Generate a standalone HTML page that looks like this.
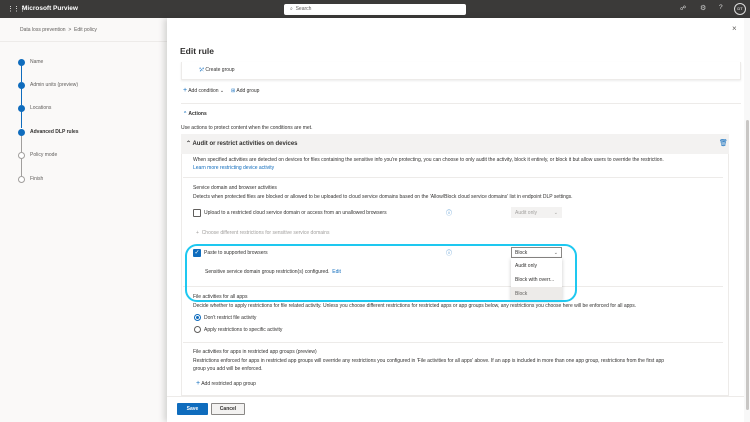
<!DOCTYPE html>
<html><head><meta charset="utf-8"><style>
*{box-sizing:border-box;margin:0;padding:0}
body{width:750px;height:422px;overflow:hidden;font-family:"Liberation Sans",sans-serif;font-size:5px;color:#323130;background:#faf9f8;position:relative}
.a{position:absolute;white-space:nowrap}
.top{left:0;top:0;width:750px;height:18px;background:#3b3a39}
.sep{position:absolute;height:1px;background:#edebe9}
.circ{position:absolute;width:7px;height:7px;border-radius:50%;left:18px}
.done{background:#0f6cbd}
.empty{border:1px solid #a19f9d;background:#fff}
.vl{position:absolute;left:21px;width:1px;background:#0f6cbd}
.blue{color:#0f6cbd}
.dd{position:absolute;border:1px solid #8a8886;background:#fff;height:11px;padding:2px 3px;font-size:5px}
.cb{position:absolute;width:8px;height:8px;border:1px solid #605e5c;border-radius:1px;background:#fff}
</style></head><body>
<div class="a top"></div>
<div class="a" style="left:7px;top:5px;color:#fff;font-size:7px;letter-spacing:-1px">⋮⋮⋮</div>
<div class="a" style="left:22px;top:5px;color:#fff;font-size:6.5px;font-weight:bold">Microsoft Purview</div>
<div class="a" style="left:284px;top:4px;width:182px;height:11px;background:#fff;border-radius:2px"></div>
<div class="a" style="left:290px;top:6px;font-size:5px;color:#605e5c">⌕ &nbsp;Search</div>
<div class="a" style="left:680px;top:5px;color:#ddd;font-size:6px">☍</div>
<div class="a" style="left:700px;top:4px;color:#ccc;font-size:7px">⚙</div>
<div class="a" style="left:719px;top:4px;color:#ddd;font-size:6.5px">?</div>
<div class="a" style="left:734px;top:3px;width:12px;height:12px;border:1px solid #ddd;border-radius:50%;color:#fff;font-size:4px;text-align:center;line-height:10px">DT</div>

<div class="a" style="left:20px;top:27px;color:#605e5c">Data loss prevention &nbsp;&gt;&nbsp; Edit policy</div>
<div class="sep" style="left:0;top:41px;width:167px"></div>
<div class="vl" style="top:65px;height:17px"></div>
<div class="vl" style="top:88px;height:17px"></div>
<div class="vl" style="top:111px;height:17px"></div>
<div class="vl" style="top:135px;height:17px;background:#a19f9d"></div>
<div class="vl" style="top:158px;height:18px;background:#a19f9d"></div>
<div class="circ done" style="top:59px"></div>
<div class="circ done" style="top:82px"></div>
<div class="circ done" style="top:105px"></div>
<div class="circ done" style="top:129px"></div>
<div class="circ empty" style="top:152px"></div>
<div class="circ empty" style="top:176px"></div>
<div class="a" style="left:30px;top:59px;color:#605e5c">Name</div>
<div class="a" style="left:30px;top:82px;color:#605e5c">Admin units (preview)</div>
<div class="a" style="left:30px;top:105px;color:#605e5c">Locations</div>
<div class="a" style="left:30px;top:129px;font-weight:bold">Advanced DLP rules</div>
<div class="a" style="left:30px;top:152px;color:#605e5c">Policy mode</div>
<div class="a" style="left:30px;top:176px;color:#605e5c">Finish</div>

<div class="a" style="left:167px;top:18px;width:583px;height:404px;background:#fff;box-shadow:-3px 0 6px rgba(0,0,0,.15)"></div>
<div class="a" style="left:744px;top:18px;width:6px;height:404px;background:#f8f8f8"></div>
<div class="a" style="left:746px;top:120px;width:3px;height:290px;background:#c8c6c4;border-radius:2px"></div>
<div class="a" style="left:732px;top:24px;font-size:8px;color:#605e5c">×</div>
<div class="a" style="left:180px;top:46px;font-size:8.5px;font-weight:bold">Edit rule</div>
<div class="a" style="left:181px;top:62px;width:560px;height:18px;border:1px solid #edebe9;border-top:none;box-shadow:0 1px 2px rgba(0,0,0,.08)"></div>
<div class="a" style="left:200px;top:67px"><span class="blue">⤱</span> Create group</div>
<div class="a" style="left:183px;top:87px"><span class="blue" style="font-size:7px">+</span> Add condition ⌄ &nbsp;&nbsp;&nbsp;&nbsp;<span class="blue">⊞</span> Add group</div>
<div class="sep" style="left:181px;top:103px;width:560px"></div>
<div class="a" style="left:183px;top:111px;font-weight:bold"><span class="blue">⌃</span> Actions</div>
<div class="a" style="left:181px;top:125px">Use actions to protect content when the conditions are met.</div>

<div class="a" style="left:181px;top:134px;width:548px;height:262px;border:1px solid #edebe9"></div>
<div class="a" style="left:181px;top:134px;width:548px;height:20px;background:#f3f2f1"></div>
<div class="a" style="left:186px;top:140px;font-size:6px;font-weight:bold">⌃ Audit or restrict activities on devices</div>
<div class="a" style="left:719px;top:139px;color:#0f6cbd;font-size:7px">🗑</div>
<div class="a" style="left:193px;top:157px">When specified activities are detected on devices for files containing the sensitive info you're protecting, you can choose to only audit the activity, block it entirely, or block it but allow users to override the restriction.</div>
<div class="a blue" style="left:193px;top:165px">Learn more restricting device activity</div>
<div class="sep" style="left:183px;top:177px;width:540px"></div>
<div class="a" style="left:193px;top:185px">Service domain and browser activities</div>
<div class="a" style="left:193px;top:194px">Detects when protected files are blocked or allowed to be uploaded to cloud service domains based on the 'Allow/Block cloud service domains' list in endpoint DLP settings.</div>
<div class="cb" style="left:193px;top:209px"></div>
<div class="a" style="left:204px;top:210px">Upload to a restricted cloud service domain or access from an unallowed browsers</div>
<div class="a blue" style="left:446px;top:208px;font-size:6px">ⓘ</div>
<div class="dd" style="left:511px;top:207px;background:#f3f2f1;border-color:#f3f2f1;color:#a19f9d;width:51px">Audit only<span style="float:right">⌄</span></div>
<div class="a" style="left:196px;top:230px;color:#a19f9d">+ &nbsp;Choose different restrictions for sensitive service domains</div>

<div class="cb" style="left:193px;top:249px;background:#0f6cbd;border-color:#0f6cbd;color:#fff;font-size:6px;line-height:6px;text-align:center">✓</div>
<div class="a" style="left:204px;top:250px">Paste to supported browsers</div>
<div class="a blue" style="left:446px;top:248px;font-size:6px">ⓘ</div>
<div class="dd" style="left:511px;top:247px;width:51px">Block<span style="float:right;color:#605e5c">⌄</span></div>
<div class="a" style="left:205px;top:269px">Sensitive service domain group restriction(s) configured. &nbsp;<span class="blue">Edit</span></div>
<div class="sep" style="left:183px;top:286px;width:540px"></div>
<div class="a" style="left:511px;top:258px;width:51px;height:42px;background:#fff;box-shadow:0 1px 4px rgba(0,0,0,.2)"></div>
<div class="a" style="left:515px;top:263px">Audit only</div>
<div class="a" style="left:515px;top:277px">Block with overr...</div>
<div class="a" style="left:511px;top:287px;width:51px;height:13px;background:#edebe9"></div>
<div class="a" style="left:515px;top:291px;color:#605e5c">Block</div>
<div class="a" style="left:185px;top:244px;width:392px;height:58px;border:2px solid #1ec8f0;border-radius:12px"></div>

<div class="a" style="left:193px;top:294px">File activities for all apps</div>
<div class="a" style="left:193px;top:303px">Decide whether to apply restrictions for file related activity. Unless you choose different restrictions for restricted apps or app groups below, any restrictions you choose here will be enforced for all apps.</div>
<div class="a" style="left:194px;top:314px;width:7px;height:7px;border:1px solid #0f6cbd;border-radius:50%"><div style="width:3px;height:3px;margin:1px;background:#0f6cbd;border-radius:50%"></div></div>
<div class="a" style="left:204px;top:315px">Don't restrict file activity</div>
<div class="a" style="left:194px;top:326px;width:7px;height:7px;border:1px solid #605e5c;border-radius:50%"></div>
<div class="a" style="left:204px;top:327px">Apply restrictions to specific activity</div>
<div class="sep" style="left:183px;top:342px;width:540px"></div>
<div class="a" style="left:193px;top:349px">File activities for apps in restricted app groups (preview)</div>
<div class="a" style="left:193px;top:358px">Restrictions enforced for apps in restricted app groups will override any restrictions you configured in 'File activities for all apps' above. If an app is included in more than one app group, restrictions from the first app</div>
<div class="a" style="left:193px;top:366px">group you add will be enforced.</div>
<div class="a" style="left:196px;top:380px"><span class="blue" style="font-size:7px">+</span> Add restricted app group</div>

<div class="a" style="left:167px;top:396px;width:577px;height:26px;background:#fff;border-top:1px solid #edebe9"></div>
<div class="a" style="left:177px;top:403px;width:31px;height:12px;background:#0f6cbd;border-radius:1px;color:#fff;font-weight:bold;text-align:center;line-height:12px">Save</div>
<div class="a" style="left:211px;top:403px;width:34px;height:12px;border:1px solid #8a8886;background:#f3f2f1;border-radius:1px;font-weight:bold;text-align:center;line-height:10px">Cancel</div>
</body></html>
